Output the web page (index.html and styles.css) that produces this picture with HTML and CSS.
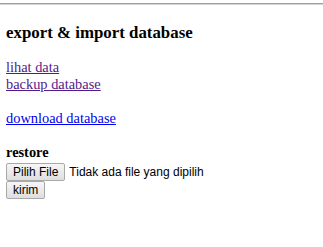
FILE: index.html
```html
<!DOCTYPE html>
<html lang="id">
<head>
    <meta charset="UTF-8">
    <title>export &amp; import database</title>
    <link rel="stylesheet" href="styles.css">
</head>
<body>
    <hr class="top-rule">
    <div class="page">
        <h3 class="title">export &amp; import database</h3>
        <a href="#" class="visited">lihat data</a><br>
        <a href="#" class="visited">backup database</a><br>
        <br>
        <a href="#">download database</a>

        <form class="restore" onsubmit="return false;">
            <b class="restore-label">restore</b>
            <div class="file-field">
                <button type="button" class="btn">Pilih File</button>
                <span class="file-name">Tidak ada file yang dipilih</span>
            </div>
            <button type="submit" class="btn">kirim</button>
        </form>
    </div>
</body>
</html>
```

FILE: styles.css
```css
body {
    margin: 0;
    font-family: "Liberation Serif", "Times New Roman", serif;
    font-size: 14.4px;
    color: #000;
    background: #fff;
}
.top-rule {
    margin: 3px 0 0 0;
    border: none;
    border-top: 1px solid #a0a0a0;
    border-bottom: 1px solid #d4d4d4;
    height: 0;
}
.page {
    padding: 0 6px;
}
.title {
    font-size: 16.85px;
    margin: 18px 0 16px 0;
}
a {
    color: #0000ee;
}
a.visited {
    color: #551a8b;
}
.restore {
    margin-top: 17px;
}
.restore-label {
    display: block;
    margin-bottom: 2px;
}
.file-field {
    display: flex;
    align-items: center;
    gap: 4px;
}
.file-name {
    font-family: "Liberation Sans", Arial, sans-serif;
    font-size: 12px;
}
.btn {
    font-family: "Liberation Sans", Arial, sans-serif;
    font-size: 12px;
    line-height: 14px;
    color: #000;
    background: linear-gradient(#f6f6f6, #dedede);
    border: 1px solid #a9a9a9;
    border-radius: 2px;
    padding: 1px 6px;
    margin: 0;
}
```
